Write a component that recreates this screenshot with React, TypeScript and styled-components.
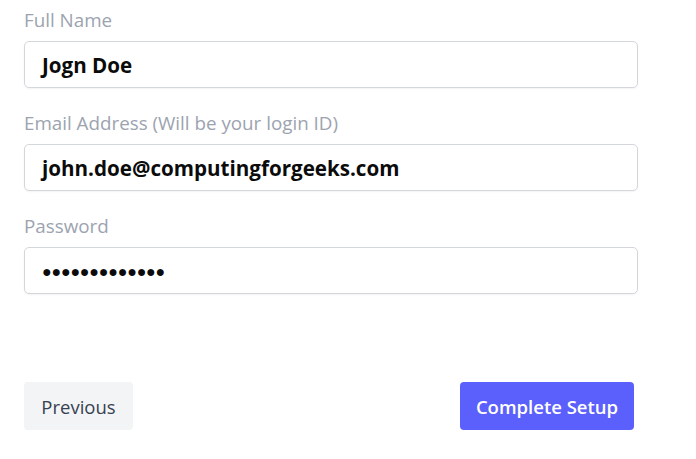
import React from "react";
import styled, { createGlobalStyle } from "styled-components";

const Global = createGlobalStyle`
  html, body { margin: 0; padding: 0; background: #ffffff; }
  body { font-family: "Open Sans", "Noto Sans", sans-serif; }
`;

const Form = styled.form`
  box-sizing: border-box;
  width: 696px;
  height: 459px;
  padding: 8px 58px 0 24px;
  display: flex;
  flex-direction: column;
`;

const Fields = styled.div`
  display: flex;
  flex-direction: column;
  gap: 23px;
`;

const Field = styled.div`
  display: flex;
  flex-direction: column;
  gap: 9px;
`;

const Label = styled.label`
  font-size: 18.8px;
  line-height: 24px;
  color: #9ca3af;
`;

const Input = styled.div`
  box-sizing: border-box;
  height: 47px;
  width: 614px;
  border: 1.5px solid #d3d6db;
  border-radius: 5px;
  box-shadow: 0 1px 2px rgba(0, 0, 0, 0.05);
  padding: 0 17px;
  display: flex;
  align-items: center;
  font-size: 20.6px;
  font-weight: 700;
  color: #0b0b0b;
`;

const Dots = styled.span`
  letter-spacing: -0.2px;
  font-size: 16px;
`;

const Actions = styled.div`
  margin-top: 88px;
  width: 610px;
  display: flex;
  justify-content: space-between;
`;

const Button = styled.button<{ $primary?: boolean }>`
  box-sizing: border-box;
  height: 48px;
  padding: 0;
  border: none;
  border-radius: 4px;
  font-family: "Open Sans", "Noto Sans", sans-serif;
  font-size: 18.5px;
  font-weight: ${(p) => (p.$primary ? 600 : 400)};
  background: ${(p) => (p.$primary ? "#5b5ffb" : "#f3f4f6")};
  color: ${(p) => (p.$primary ? "#ffffff" : "#374151")};
  width: ${(p) => (p.$primary ? "174px" : "109px")};
`;

export default function App() {
  return (
    <>
      <Global />
      <Form onSubmit={(e) => e.preventDefault()}>
        <Fields>
          <Field>
            <Label>Full Name</Label>
            <Input>Jogn Doe</Input>
          </Field>
          <Field>
            <Label>Email Address (Will be your login ID)</Label>
            <Input>john.doe@computingforgeeks.com</Input>
          </Field>
          <Field>
            <Label>Password</Label>
            <Input>
              <Dots>{"\u25CF".repeat(13)}</Dots>
            </Input>
          </Field>
        </Fields>
        <Actions>
          <Button type="button">Previous</Button>
          <Button type="button" $primary>
            Complete Setup
          </Button>
        </Actions>
      </Form>
    </>
  );
}
